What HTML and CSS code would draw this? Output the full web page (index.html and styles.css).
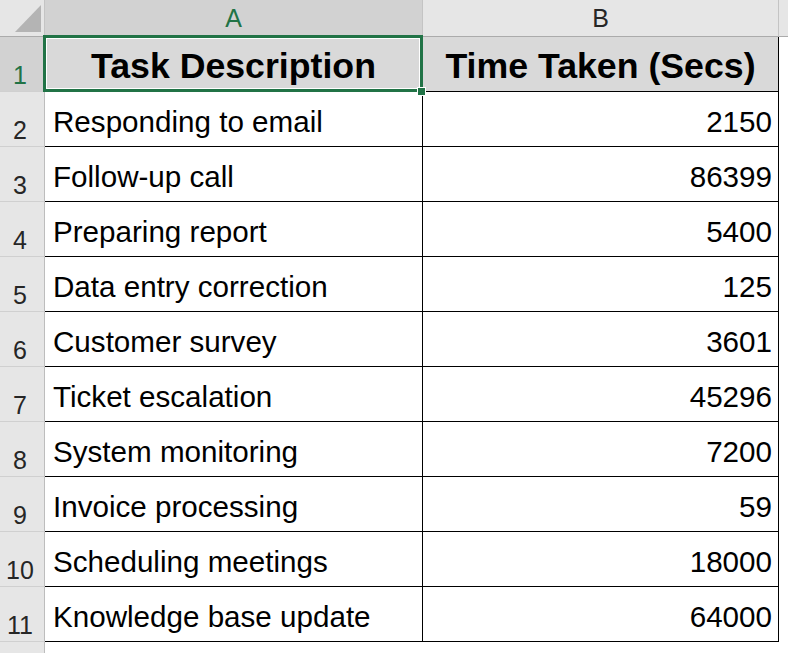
FILE: index.html
```html
<!DOCTYPE html>
<html>
<head>
<meta charset="utf-8">
<link rel="stylesheet" href="styles.css">
</head>
<body>
<div class="sheet">
  <div class="corner"><span class="tri"></span></div>
  <div class="colhead sel">A</div>
  <div class="colhead">B</div>
  <div class="colhead rest"></div>

  <div class="rowhead sel">1</div>
  <div class="cell title a1">Task Description<div class="selection"><span class="handle"></span></div></div>
  <div class="cell title b">Time Taken (Secs)</div>
  <div class="blank"></div>

  <div class="rowhead">2</div><div class="cell a">Responding to email</div><div class="cell b num">2150</div><div class="blank"></div>
  <div class="rowhead">3</div><div class="cell a">Follow-up call</div><div class="cell b num">86399</div><div class="blank"></div>
  <div class="rowhead">4</div><div class="cell a">Preparing report</div><div class="cell b num">5400</div><div class="blank"></div>
  <div class="rowhead">5</div><div class="cell a">Data entry correction</div><div class="cell b num">125</div><div class="blank"></div>
  <div class="rowhead">6</div><div class="cell a">Customer survey</div><div class="cell b num">3601</div><div class="blank"></div>
  <div class="rowhead">7</div><div class="cell a">Ticket escalation</div><div class="cell b num">45296</div><div class="blank"></div>
  <div class="rowhead">8</div><div class="cell a">System monitoring</div><div class="cell b num">7200</div><div class="blank"></div>
  <div class="rowhead">9</div><div class="cell a">Invoice processing</div><div class="cell b num">59</div><div class="blank"></div>
  <div class="rowhead">10</div><div class="cell a">Scheduling meetings</div><div class="cell b num">18000</div><div class="blank"></div>
  <div class="rowhead">11</div><div class="cell a">Knowledge base update</div><div class="cell b num">64000</div><div class="blank"></div>

  <div class="rowhead last"></div><div class="empty"></div><div class="empty"></div><div class="blank"></div>
</div>
</body>
</html>
```

FILE: styles.css
```css
html, body {
  margin: 0;
  padding: 0;
  background: #ffffff;
  overflow: hidden;
}

.sheet {
  width: 788px;
  height: 653px;
  display: grid;
  grid-template-columns: 45px 378px 356px 1fr;
  grid-template-rows: 37px repeat(11, 55px) 1fr;
  font-family: "Liberation Sans", Arial, sans-serif;
  color: #000;
}

.sheet > div {
  box-sizing: border-box;
}

.corner {
  background: #e6e6e6;
  border-right: 1px solid #c4c4c4;
  border-bottom: 1px solid #ababab;
  position: relative;
}

.tri {
  position: absolute;
  left: 15px;
  top: 5px;
  width: 26px;
  height: 27px;
  background: #b4b4b4;
  clip-path: polygon(100% 0, 100% 100%, 0 100%);
}

.colhead {
  background: #e6e6e6;
  border-right: 1px solid #c4c4c4;
  border-bottom: 1px solid #ababab;
  display: flex;
  align-items: flex-end;
  justify-content: center;
  font-size: 25px;
  line-height: 29px;
  padding-bottom: 3px;
  color: #262626;
}

.colhead.sel {
  background: #d2d2d2;
  color: #217346;
}

.colhead.rest {
  border-right: none;
}

.rowhead {
  background: #e6e6e6;
  border-right: 1px solid #bdbdbd;
  border-bottom: 1px solid #d0d0d0;
  display: flex;
  align-items: flex-end;
  justify-content: center;
  font-size: 25px;
  line-height: 29px;
  padding-bottom: 1px;
  padding-right: 4px;
  color: #262626;
}

.rowhead.sel {
  background: #d2d2d2;
  color: #217346;
}

.rowhead.last {
  border-bottom: none;
}

.cell {
  display: flex;
  align-items: flex-end;
  border-right: 1px solid #000;
  border-bottom: 1px solid #000;
  background: #fff;
  font-size: 29.6px;
  line-height: 33px;
  padding: 0 6px 8px 8px;
  white-space: nowrap;
}

.cell.num {
  justify-content: flex-end;
}

.cell.title {
  background: #d9d9d9;
  font-weight: bold;
  font-size: 35.7px;
  line-height: 40px;
  justify-content: center;
  padding: 0 0 5px 0;
}

.a1 {
  position: relative;
}

.selection {
  position: absolute;
  left: -2px;
  top: -2px;
  right: -1px;
  bottom: -1px;
  border: 3px solid #217346;
  box-shadow: inset 0 0 0 1px #ffffff;
  box-sizing: border-box;
}

.handle {
  position: absolute;
  right: -6px;
  bottom: -7px;
  width: 7px;
  height: 7px;
  background: #217346;
  border: 1px solid #ffffff;
}

.blank {
  background: #fff;
}

.empty {
  background: #fff;
}
```
